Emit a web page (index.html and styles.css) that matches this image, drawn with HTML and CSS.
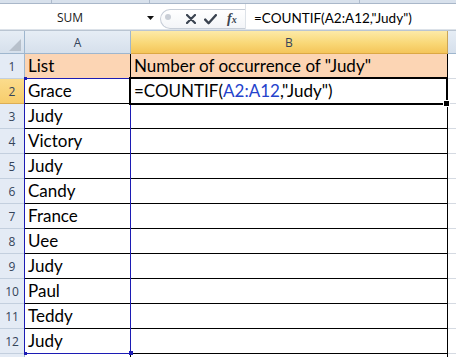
FILE: index.html
```html
<!DOCTYPE html>
<html>
<head>
<meta charset="utf-8">
<link rel="stylesheet" href="styles.css">
</head>
<body>
<div class="app">
  <div class="ribbon-edge">
    <span class="seg s1"></span><span class="seg s2"></span><span class="seg s3"></span><span class="seg s4"></span>
  </div>
  <div class="fbar">
    <div class="namebox">SUM</div>
    <div class="nb-arrow"><svg width="7" height="4" viewBox="0 0 7 4"><path d="M0 0H7L3.5 4Z" fill="#111"/></svg></div>
    <div class="fb-tools">
      <span class="grip"></span>
      <svg class="ic-x" width="10" height="10" viewBox="0 0 10 10"><path d="M1 1L9 9M9 1L1 9" stroke="#3a4350" stroke-width="2.2" stroke-linecap="round" fill="none"/></svg>
      <svg class="ic-check" width="13" height="11" viewBox="0 0 13 11"><path d="M1.2 5.6L4.6 9.2L11.8 1.2" stroke="#3a4350" stroke-width="2.4" stroke-linecap="round" stroke-linejoin="round" fill="none"/></svg>
      <span class="fx">f<span class="fx-sub">x</span></span>
    </div>
    <div class="finput">=COUNTIF(A2:A12,"Judy")</div>
  </div>
  <div class="fbar-sep"></div>
  <div class="sheet">
    <div class="ch corner"><svg width="12" height="12" viewBox="0 0 12 12"><path d="M12 0V12H0Z" fill="#b7c0cb"/></svg></div>
    <div class="ch">A</div>
    <div class="ch sel">B</div>
    <div class="ch cc-h"></div>

    <div class="rh">1</div><div class="c hd">List</div><div class="c hd">Number of occurrence of "Judy"</div><div class="cc"></div>
    <div class="rh sel">2</div><div class="c">Grace</div><div class="c">=COUNTIF(<span class="ref">A2:A12</span>,"Judy")</div><div class="cc"></div>
    <div class="rh">3</div><div class="c">Judy</div><div class="c"></div><div class="cc"></div>
    <div class="rh">4</div><div class="c">Victory</div><div class="c"></div><div class="cc"></div>
    <div class="rh">5</div><div class="c">Judy</div><div class="c"></div><div class="cc"></div>
    <div class="rh">6</div><div class="c">Candy</div><div class="c"></div><div class="cc"></div>
    <div class="rh">7</div><div class="c">France</div><div class="c"></div><div class="cc"></div>
    <div class="rh">8</div><div class="c">Uee</div><div class="c"></div><div class="cc"></div>
    <div class="rh">9</div><div class="c">Judy</div><div class="c"></div><div class="cc"></div>
    <div class="rh">10</div><div class="c">Paul</div><div class="c"></div><div class="cc"></div>
    <div class="rh">11</div><div class="c">Teddy</div><div class="c"></div><div class="cc"></div>
    <div class="rh">12</div><div class="c">Judy</div><div class="c"></div><div class="cc"></div>
    <div class="rh last"></div><div class="c last"></div><div class="c last"></div><div class="cc last"></div>

    <div class="range"></div>
    <div class="handle h-tl"></div>
    <div class="handle h-bl"></div>
    <div class="handle h-br"></div>
    <div class="selection"></div>
    <div class="fill-handle"></div>
  </div>
</div>
</body>
</html>
```
FILE: styles.css
```css
* { box-sizing: border-box; }
html, body { margin: 0; padding: 0; }
body {
  width: 456px;
  height: 357px;
  overflow: hidden;
  background: #fff;
  font-family: "Lato", "Open Sans", sans-serif;
}
.app {
  width: 456px;
  height: 357px;
  display: flex;
  flex-direction: column;
  overflow: hidden;
}

/* ribbon bottom edge */
.ribbon-edge {
  height: 4px;
  display: flex;
  background: #d8e1ec;
  border-bottom: 1px solid #a9b7c9;
}
.seg { height: 3px; border-right: 1px solid #aebbcc; }
.s1 { width: 52px; }
.s2 { width: 98px; }
.s3 { width: 210px; }
.s4 { flex: 1; border-right: none; }

/* formula bar */
.fbar {
  height: 25px;
  display: flex;
  background: #fff;
}
.namebox {
  width: 140px;
  display: flex;
  align-items: center;
  justify-content: center;
  font-family: "Open Sans", sans-serif;
  font-size: 12px;
  color: #1a1a1a;
  padding-top: 2px;
}
.nb-arrow {
  width: 20px;
  display: flex;
  align-items: center;
  padding-left: 7px;
  padding-top: 2px;
}
.fb-tools {
  width: 85px;
  margin-top: 5px;
  height: 20px;
  border: 1px solid #c6cdd7;
  border-right: none;
  border-radius: 10px 0 0 10px;
  background: linear-gradient(#ffffff, #f3f5f8);
  display: flex;
  align-items: center;
  padding-left: 4px;
}
.grip {
  width: 6px;
  height: 6px;
  border-radius: 50%;
  background: #c9ced6;
  align-self: flex-start;
  margin-top: 4px;
}
.ic-x { margin-left: 15px; }
.ic-check { margin-left: 8px; }
.fx {
  margin-left: 10px;
  font-family: "Liberation Serif", serif;
  font-style: italic;
  font-weight: bold;
  font-size: 14px;
  color: #3a4350;
  line-height: 1;
}
.fx-sub { font-size: 10px; }
.finput {
  flex: 1;
  padding-left: 8px;
  padding-top: 2px;
  font-family: "Lato", sans-serif;
  font-size: 13.5px;
  line-height: 24px;
  color: #000;
  border-left: 1px solid #dde2e8;
  white-space: nowrap;
}
.fbar-sep {
  height: 2px;
  border-top: 1px solid #dce2e9;
  background: #bac5d2;
}

/* sheet grid */
.sheet {
  position: relative;
  flex: 1;
  display: grid;
  grid-template-columns: 25px 106px 317px 1fr;
  grid-template-rows: 23px repeat(12, 25px) 1fr;
}
.ch {
  background: linear-gradient(#e6edf5, #d6e0ec);
  border-right: 1px solid #9eb6ce;
  border-bottom: 1px solid #9eb6ce;
  display: flex;
  align-items: center;
  justify-content: center;
  font-family: "Open Sans", sans-serif;
  font-size: 12px;
  color: #34445a;
}
.ch.corner {
  justify-content: flex-end;
  align-items: flex-end;
  padding: 0 3px 2px 0;
}
.ch.corner svg { display: block; }
.ch.sel {
  background: linear-gradient(#fdeaa8, #f9d877 55%, #f4c55a);
  border-bottom-color: #dca843;
  border-right-color: #c9a458;
}
.ch.cc-h { border-right: none; }

.rh {
  background: #e4ebf5;
  border-right: 1px solid #9eb6ce;
  border-bottom: 1px solid #c3cfde;
  display: flex;
  align-items: center;
  justify-content: center;
  font-family: "Open Sans", sans-serif;
  font-size: 12px;
  color: #34445a;
}
.rh.sel {
  background: linear-gradient(#fbdc8c, #f7cd6c);
  border-bottom-color: #dcae55;
  border-right-color: #d2a552;
}
.c {
  border-right: 1px solid #000;
  border-bottom: 1px solid #000;
  padding-left: 3px;
  font-size: 17px;
  line-height: 24px;
  white-space: nowrap;
  color: #000;
}
.c.hd { background: #fcd5b4; }
.ref { color: #2442cc; }
.cc { border-bottom: 1px solid #d5dae2; }
.last { border-bottom: none; }

/* range finder & selection overlays */
.range {
  position: absolute;
  left: 24px;
  top: 47px;
  width: 107px;
  height: 276px;
  border: 1px solid #1c1cb4;
}
.handle {
  position: absolute;
  background: #1c1cb4;
}
.h-tl { left: 24px; top: 46px; width: 3px; height: 3px; }
.h-bl { left: 24px; top: 321px; width: 3px; height: 3px; }
.h-br { left: 129px; top: 320px; width: 4px; height: 4px; }
.selection {
  position: absolute;
  left: 129px;
  top: 46px;
  width: 319px;
  height: 28px;
  border: 2px solid #000;
}
.fill-handle {
  position: absolute;
  left: 444px;
  top: 70px;
  width: 5px;
  height: 5px;
  background: #000;
  outline: 1px solid #fff;
}
```
